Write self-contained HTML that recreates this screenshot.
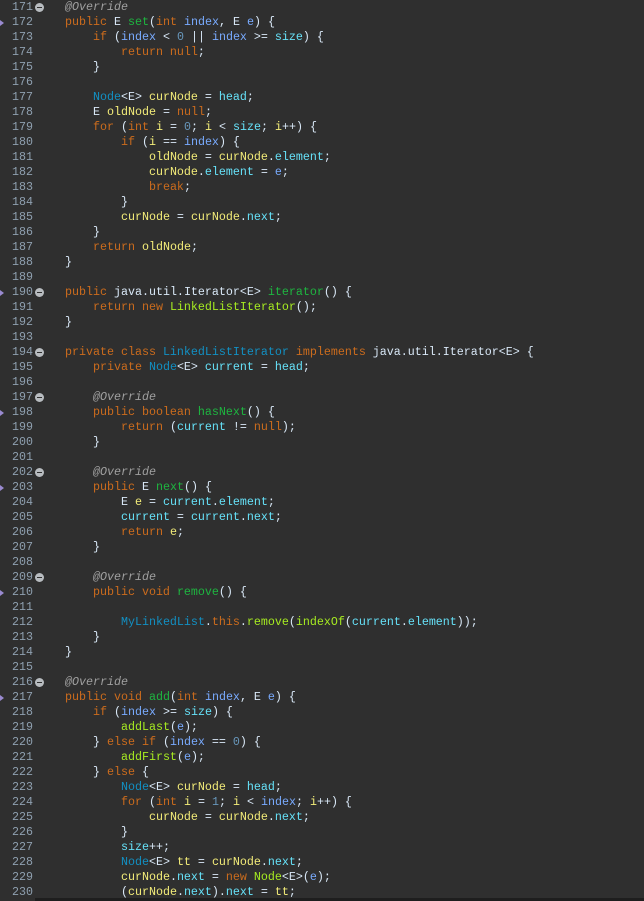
<!DOCTYPE html>
<html><head><meta charset="utf-8"><style>
html,body{margin:0;padding:0;background:#2f2f2f;width:644px;height:901px;overflow:hidden}
#c{position:absolute;left:0;top:0;font-family:"Liberation Mono",monospace;font-size:11.67px;line-height:15px;color:#d9e8f7}
.r{height:15px;position:relative}
.n{position:absolute;left:0;width:33px;text-align:right;color:#8fa0b0}
.x{position:absolute;left:65px;white-space:pre}
.fo{position:absolute;left:35px;top:3px;width:9px;height:9px;border-radius:50%;background:#b8bcc0}
.fo:after{content:"";position:absolute;left:2px;top:4px;width:5px;height:1px;background:#2f2f2f}
.ar{position:absolute;left:0;top:5px;width:0;height:0;border-left:4px solid #9a8ad0;border-top:3px solid transparent;border-bottom:3px solid transparent}
.k{color:#cc6c1d}.a{color:#a0a0a0;font-style:italic}.m{color:#1eb540}.p{color:#79abff}.f{color:#66e1f8}.l{color:#f3ec79}.t{color:#1290c3}.c{color:#a7ec21}.nu{color:#6897bb}.w{color:#d9e8f7}
#bb{position:absolute;left:35px;top:898px;width:609px;height:3px;background:#1e1e1e}
</style></head><body><div id="c">
<div class="r"><span class="n">171</span><span class="fo"></span><span class="x"><span class="a">@Override</span></span></div>
<div class="r"><span class="ar"></span><span class="n">172</span><span class="x"><span class="k">public</span> E <span class="m">set</span>(<span class="k">int</span> <span class="p">index</span>, E <span class="p">e</span>) {</span></div>
<div class="r"><span class="n">173</span><span class="x">    <span class="k">if</span> (<span class="p">index</span> &lt; <span class="nu">0</span> || <span class="p">index</span> &gt;= <span class="f">size</span>) {</span></div>
<div class="r"><span class="n">174</span><span class="x">        <span class="k">return null</span>;</span></div>
<div class="r"><span class="n">175</span><span class="x">    }</span></div>
<div class="r"><span class="n">176</span></div>
<div class="r"><span class="n">177</span><span class="x">    <span class="t">Node</span>&lt;E&gt; <span class="l">curNode</span> = <span class="f">head</span>;</span></div>
<div class="r"><span class="n">178</span><span class="x">    E <span class="l">oldNode</span> = <span class="k">null</span>;</span></div>
<div class="r"><span class="n">179</span><span class="x">    <span class="k">for</span> (<span class="k">int</span> <span class="l">i</span> = <span class="nu">0</span>; <span class="l">i</span> &lt; <span class="f">size</span>; <span class="l">i</span>++) {</span></div>
<div class="r"><span class="n">180</span><span class="x">        <span class="k">if</span> (<span class="l">i</span> == <span class="p">index</span>) {</span></div>
<div class="r"><span class="n">181</span><span class="x">            <span class="l">oldNode</span> = <span class="l">curNode</span>.<span class="f">element</span>;</span></div>
<div class="r"><span class="n">182</span><span class="x">            <span class="l">curNode</span>.<span class="f">element</span> = <span class="p">e</span>;</span></div>
<div class="r"><span class="n">183</span><span class="x">            <span class="k">break</span>;</span></div>
<div class="r"><span class="n">184</span><span class="x">        }</span></div>
<div class="r"><span class="n">185</span><span class="x">        <span class="l">curNode</span> = <span class="l">curNode</span>.<span class="f">next</span>;</span></div>
<div class="r"><span class="n">186</span><span class="x">    }</span></div>
<div class="r"><span class="n">187</span><span class="x">    <span class="k">return</span> <span class="l">oldNode</span>;</span></div>
<div class="r"><span class="n">188</span><span class="x">}</span></div>
<div class="r"><span class="n">189</span></div>
<div class="r"><span class="ar"></span><span class="n">190</span><span class="fo"></span><span class="x"><span class="k">public</span> java.util.<span class="w">Iterator</span>&lt;E&gt; <span class="m">iterator</span>() {</span></div>
<div class="r"><span class="n">191</span><span class="x">    <span class="k">return new</span> <span class="c">LinkedListIterator</span>();</span></div>
<div class="r"><span class="n">192</span><span class="x">}</span></div>
<div class="r"><span class="n">193</span></div>
<div class="r"><span class="n">194</span><span class="fo"></span><span class="x"><span class="k">private class</span> <span class="t">LinkedListIterator</span> <span class="k">implements</span> java.util.<span class="w">Iterator</span>&lt;E&gt; {</span></div>
<div class="r"><span class="n">195</span><span class="x">    <span class="k">private</span> <span class="t">Node</span>&lt;E&gt; <span class="f">current</span> = <span class="f">head</span>;</span></div>
<div class="r"><span class="n">196</span></div>
<div class="r"><span class="n">197</span><span class="fo"></span><span class="x">    <span class="a">@Override</span></span></div>
<div class="r"><span class="ar"></span><span class="n">198</span><span class="x">    <span class="k">public boolean</span> <span class="m">hasNext</span>() {</span></div>
<div class="r"><span class="n">199</span><span class="x">        <span class="k">return</span> (<span class="f">current</span> != <span class="k">null</span>);</span></div>
<div class="r"><span class="n">200</span><span class="x">    }</span></div>
<div class="r"><span class="n">201</span></div>
<div class="r"><span class="n">202</span><span class="fo"></span><span class="x">    <span class="a">@Override</span></span></div>
<div class="r"><span class="ar"></span><span class="n">203</span><span class="x">    <span class="k">public</span> E <span class="m">next</span>() {</span></div>
<div class="r"><span class="n">204</span><span class="x">        E <span class="l">e</span> = <span class="f">current</span>.<span class="f">element</span>;</span></div>
<div class="r"><span class="n">205</span><span class="x">        <span class="f">current</span> = <span class="f">current</span>.<span class="f">next</span>;</span></div>
<div class="r"><span class="n">206</span><span class="x">        <span class="k">return</span> <span class="l">e</span>;</span></div>
<div class="r"><span class="n">207</span><span class="x">    }</span></div>
<div class="r"><span class="n">208</span></div>
<div class="r"><span class="n">209</span><span class="fo"></span><span class="x">    <span class="a">@Override</span></span></div>
<div class="r"><span class="ar"></span><span class="n">210</span><span class="x">    <span class="k">public void</span> <span class="m">remove</span>() {</span></div>
<div class="r"><span class="n">211</span></div>
<div class="r"><span class="n">212</span><span class="x">        <span class="t">MyLinkedList</span>.<span class="k">this</span>.<span class="c">remove</span>(<span class="c">indexOf</span>(<span class="f">current</span>.<span class="f">element</span>));</span></div>
<div class="r"><span class="n">213</span><span class="x">    }</span></div>
<div class="r"><span class="n">214</span><span class="x">}</span></div>
<div class="r"><span class="n">215</span></div>
<div class="r"><span class="n">216</span><span class="fo"></span><span class="x"><span class="a">@Override</span></span></div>
<div class="r"><span class="ar"></span><span class="n">217</span><span class="x"><span class="k">public void</span> <span class="m">add</span>(<span class="k">int</span> <span class="p">index</span>, E <span class="p">e</span>) {</span></div>
<div class="r"><span class="n">218</span><span class="x">    <span class="k">if</span> (<span class="p">index</span> &gt;= <span class="f">size</span>) {</span></div>
<div class="r"><span class="n">219</span><span class="x">        <span class="c">addLast</span>(<span class="p">e</span>);</span></div>
<div class="r"><span class="n">220</span><span class="x">    } <span class="k">else if</span> (<span class="p">index</span> == <span class="nu">0</span>) {</span></div>
<div class="r"><span class="n">221</span><span class="x">        <span class="c">addFirst</span>(<span class="p">e</span>);</span></div>
<div class="r"><span class="n">222</span><span class="x">    } <span class="k">else</span> {</span></div>
<div class="r"><span class="n">223</span><span class="x">        <span class="t">Node</span>&lt;E&gt; <span class="l">curNode</span> = <span class="f">head</span>;</span></div>
<div class="r"><span class="n">224</span><span class="x">        <span class="k">for</span> (<span class="k">int</span> <span class="l">i</span> = <span class="nu">1</span>; <span class="l">i</span> &lt; <span class="p">index</span>; <span class="l">i</span>++) {</span></div>
<div class="r"><span class="n">225</span><span class="x">            <span class="l">curNode</span> = <span class="l">curNode</span>.<span class="f">next</span>;</span></div>
<div class="r"><span class="n">226</span><span class="x">        }</span></div>
<div class="r"><span class="n">227</span><span class="x">        <span class="f">size</span>++;</span></div>
<div class="r"><span class="n">228</span><span class="x">        <span class="t">Node</span>&lt;E&gt; <span class="l">tt</span> = <span class="l">curNode</span>.<span class="f">next</span>;</span></div>
<div class="r"><span class="n">229</span><span class="x">        <span class="l">curNode</span>.<span class="f">next</span> = <span class="k">new</span> <span class="c">Node</span>&lt;E&gt;(<span class="p">e</span>);</span></div>
<div class="r"><span class="n">230</span><span class="x">        (<span class="l">curNode</span>.<span class="f">next</span>).<span class="f">next</span> = <span class="l">tt</span>;</span></div>
</div><div id="bb"></div></body></html>
